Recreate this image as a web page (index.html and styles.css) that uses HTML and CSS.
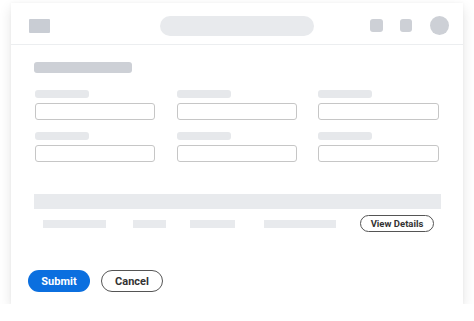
FILE: index.html
```html
<!DOCTYPE html>
<html lang="en">
<head>
<meta charset="utf-8">
<title>Form</title>
<link rel="stylesheet" href="styles.css">
</head>
<body>
<div class="page">
  <div class="card">
    <header class="topbar">
      <div class="logo"></div>
      <div class="search"></div>
      <div class="actions">
        <span class="icon-sq"></span>
        <span class="icon-sq small"></span>
        <span class="avatar"></span>
      </div>
    </header>
    <main class="content">
      <div class="title-sk"></div>
      <div class="fields">
        <div class="field"><span class="label-sk"></span><span class="input"></span></div>
        <div class="field"><span class="label-sk"></span><span class="input"></span></div>
        <div class="field"><span class="label-sk"></span><span class="input wide"></span></div>
        <div class="field"><span class="label-sk"></span><span class="input"></span></div>
        <div class="field"><span class="label-sk"></span><span class="input"></span></div>
        <div class="field"><span class="label-sk"></span><span class="input wide"></span></div>
      </div>
      <div class="table">
        <div class="table-head"></div>
        <div class="table-row">
          <span class="cell-sk c1"></span>
          <span class="cell-sk c2"></span>
          <span class="cell-sk c3"></span>
          <span class="cell-sk c4"></span>
          <button class="btn-outline small">View Details</button>
        </div>
      </div>
    </main>
    <footer class="footer">
      <button class="btn-primary">Submit</button>
      <button class="btn-outline">Cancel</button>
    </footer>
  </div>
</div>
</body>
</html>
```
FILE: styles.css
```css
* { box-sizing: border-box; }
html, body { margin: 0; padding: 0; background: #ffffff; }
body { font-family: Roboto, "Liberation Sans", Arial, sans-serif; }

.page { padding: 3px 11px 0 11px; }

.card {
  width: 452px;
  height: 301px;
  background: #fff;
  box-shadow: 0 5px 12px rgba(0,0,0,0.11), 0 0 3px rgba(0,0,0,0.04);
  display: flex;
  flex-direction: column;
}

.topbar {
  height: 42px;
  padding: 4px 14px 0 18px;
  border-bottom: 1px solid #eceef0;
  display: flex;
  align-items: center;
}
.logo { width: 21px; height: 14px; background: #c9cdd4; border-radius: 1px; }
.search { width: 154px; height: 20px; margin-left: 110px; background: #e8eaed; border-radius: 10px; }
.actions { margin-left: auto; display: flex; align-items: center; }
.icon-sq { width: 13px; height: 13px; background: #cdd0d6; border-radius: 3px; }
.icon-sq.small { width: 12px; margin-left: 17px; }
.avatar { width: 19px; height: 19px; margin-left: 18px; border-radius: 50%; background: #cdd0d6; }

.content { padding: 17px 22px 0 23px; }
.title-sk { width: 98px; height: 11px; background: #cdd0d6; border-radius: 3px; }

.fields {
  margin: 17px 0 0 1px;
  display: grid;
  grid-template-columns: 142px 141px 121px;
  row-gap: 12px;
}
.field { display: flex; flex-direction: column; }
.label-sk { width: 54px; height: 8px; background: #e6e8eb; border-radius: 3px; }
.input {
  margin-top: 5px;
  width: 120px;
  height: 17px;
  border: 1px solid #c6c6c6;
  border-radius: 3px;
  background: #fff;
}
.input.wide { width: 121px; }

.table { margin-top: 32px; }
.table-head { width: 407px; height: 15px; background: #e8eaed; }
.table-row {
  margin-top: 6px;
  display: grid;
  grid-template-columns: 90px 57px 74px 1fr auto;
  align-items: center;
  padding: 0 7px 0 9px;
  width: 407px;
}
.cell-sk { height: 8px; background: #e8eaed; }
.c1 { width: 63px; }
.c2 { width: 33px; }
.c3 { width: 45px; }
.c4 { width: 72px; }

.footer {
  margin-top: auto;
  padding: 0 0 12px 17px;
  display: flex;
  gap: 11px;
}

button { font-family: Roboto, "Liberation Sans", Arial, sans-serif; font-weight: 700; cursor: pointer; }
.btn-primary {
  width: 62px; height: 22px;
  border: none; border-radius: 11px;
  background: #0b6fdf; color: #fff;
  font-size: 11px;
  padding: 0;
}
.btn-outline {
  width: 62px; height: 22px;
  border: 1px solid #555; border-radius: 11px;
  background: #fff; color: #333;
  font-size: 11px;
  padding: 0;
}
.btn-outline.small {
  width: 74px; height: 17px;
  border-radius: 9px;
  font-size: 9.5px;
  color: #333;
}
```
